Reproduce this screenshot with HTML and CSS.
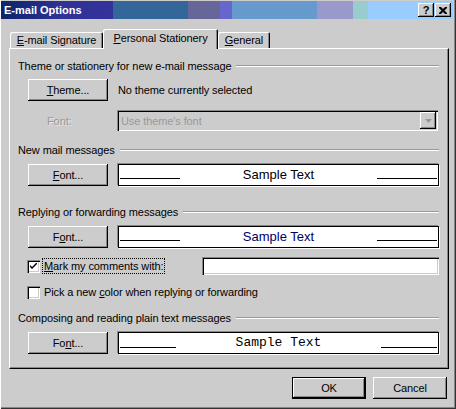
FILE: index.html
```html
<!DOCTYPE html>
<html lang="en">
<head>
  <meta charset="UTF-8">
  <title>E-mail Options</title>
  <link rel="stylesheet" href="styles.css">
</head>
<body>
  <div class="window">
    <div class="titlebar">
      <span class="title">E-mail Options</span>
      <div class="title-buttons">
        <span class="tb-btn">?</span>
        <span class="tb-btn">
          <svg width="8" height="7" viewBox="0 0 8 7"><path d="M0 0h2l2 2 2-2h2v1l-2.5 2.5L8 6v1H6L4 5 2 7H0V6l2.5-2.5L0 1z" fill="#000"/></svg>
        </span>
      </div>
    </div>

    <div class="tabs">
      <div class="tab tab-sig"><u>E</u>-mail Signature</div>
      <div class="tab tab-active"><u>P</u>ersonal Stationery</div>
      <div class="tab tab-gen"><u>G</u>eneral</div>
    </div>

    <div class="panel">
      <div class="group-head head-first"><span>Theme or stationery for new e-mail message</span><i></i></div>
      <div class="row row-theme">
        <button class="btn"><u>T</u>heme...</button>
        <span class="row-text">No theme currently selected</span>
      </div>
      <div class="row row-font">
        <span class="label-disabled">Font:</span>
        <div class="combo">
          <span>Use theme's font</span>
          <span class="combo-arrow">
            <svg width="7" height="4" viewBox="0 0 7 4"><path d="M0 0h7L3.5 4z" fill="#999"/></svg>
          </span>
        </div>
      </div>

      <div class="group-head head-new"><span>New mail messages</span><i></i></div>
      <div class="row row-sample">
        <button class="btn"><u>F</u>ont...</button>
        <div class="sample"><b class="rule"></b><span class="sample-text">Sample Text</span><b class="rule"></b></div>
      </div>

      <div class="group-head head-reply"><span>Replying or forwarding messages</span><i></i></div>
      <div class="row row-sample">
        <button class="btn">F<u>o</u>nt...</button>
        <div class="sample"><b class="rule"></b><span class="sample-text navy">Sample Text</span><b class="rule"></b></div>
      </div>
      <div class="row row-mark">
        <span class="check checked">
          <svg width="7" height="7" viewBox="0 0 7 7"><path d="M0 2l2 2 5-5v2L2 6 0 4z" fill="#000"/></svg>
        </span>
        <span class="check-label focused"><u>M</u>ark my comments with:</span>
        <div class="textbox"></div>
      </div>
      <div class="row row-pick">
        <span class="check"></span>
        <span class="check-label">Pick a new <u>c</u>olor when replying or forwarding</span>
      </div>

      <div class="group-head head-plain"><span>Composing and reading plain text messages</span><i></i></div>
      <div class="row row-sample">
        <button class="btn">Fo<u>n</u>t...</button>
        <div class="sample mono"><b class="rule"></b><span class="sample-text">Sample Text</span><b class="rule"></b></div>
      </div>
    </div>

    <div class="actions">
      <button class="btn btn-default">OK</button>
      <button class="btn btn-dlg">Cancel</button>
    </div>
  </div>
</body>
</html>
```

FILE: styles.css
```css
/* Reset */
* {
  margin: 0;
  padding: 0;
  box-sizing: border-box;
}

body {
  font-family: 'Liberation Sans', Arial, sans-serif;
  font-size: 11px;
  letter-spacing: -0.1px;
  color: #000;
  background-color: #ccc;
  width: 456px;
  height: 409px;
  overflow: hidden;
}

u {
  text-decoration: underline;
  text-underline-offset: 1px;
}

/* Window frame */
.window {
  width: 456px;
  height: 409px;
  background-color: #ccc;
  padding: 1px 3px 0 1px;
  display: flex;
  flex-direction: column;
  box-shadow: inset 1px 0 #fff, inset -1px -1px #333, inset -2px -2px #888;
}

/* Title bar */
.titlebar {
  height: 18px;
  display: flex;
  align-items: center;
  justify-content: space-between;
  padding: 0 2px 0 3px;
  background: linear-gradient(90deg,
    #0c2668 0, #1c2a80 30px, #303296 60px, #333399 112px,
    #336699 112px, #336699 187px,
    #666699 187px, #666699 219px,
    #6666cc 219px, #6666cc 231px,
    #6699cc 231px, #6699cc 316px,
    #9999cc 316px, #9999cc 352px,
    #99cccc 352px, #99cccc 367px,
    #99ccff 367px);
}

.title {
  color: #fff;
  font-weight: bold;
  font-size: 11px;
  letter-spacing: 0;
}

.title-buttons {
  display: flex;
  gap: 1px;
}

.tb-btn {
  width: 16px;
  height: 14px;
  background-color: #ccc;
  display: flex;
  align-items: center;
  justify-content: center;
  font-weight: bold;
  font-size: 11px;
  box-shadow: inset -1px -1px #000, inset 1px 1px #fff, inset -2px -2px #888;
}

/* Tabs */
.tabs {
  height: 29px;
  display: flex;
  align-items: flex-end;
  padding-left: 9px;
  position: relative;
  z-index: 1;
}

.tab {
  height: 16px;
  padding-top: 2px;
  text-align: center;
  background-color: #ccc;
  border-radius: 2px 2px 0 0;
  box-shadow: inset 1px 1px #fff, inset -1px 0 #000, inset -2px 0 #888;
}

.tab-sig {
  width: 93px;
}

.tab-active {
  width: 115px;
  height: 20px;
  margin-bottom: -1px;
  padding-top: 3px;
}

.tab-gen {
  width: 52px;
}

/* Tab panel */
.panel {
  margin-left: 8px;
  width: 440px;
  height: 321px;
  padding: 0 9px 0 8px;
  border: 1px solid;
  border-color: #fff #000 #000 #fff;
  box-shadow: inset -1px -1px #888;
  display: flex;
  flex-direction: column;
}

/* Group headers with etched rule */
.group-head {
  height: 14px;
  display: flex;
  align-items: center;
}

.group-head i {
  flex: 1;
  height: 2px;
  margin-left: 5px;
  border-top: 1px solid #999;
  border-bottom: 1px solid #fff;
}

.head-first { margin-top: 10px; }
.head-new { margin-top: 12px; }
.head-reply { margin-top: 19px; }
.head-plain { margin-top: 12px; }

/* Rows */
.row {
  display: flex;
  align-items: center;
  padding-left: 10px;
}

.row-theme {
  margin-top: 6px;
  height: 22px;
}

.row-text {
  margin-left: 10px;
}

.row-font {
  margin-top: 9px;
  height: 21px;
}

.label-disabled {
  color: #999;
  width: 89px;
  padding-left: 19px;
  text-shadow: 1px 1px #e6e6e6;
}

.row-sample {
  margin-top: 7px;
  height: 22px;
}

.row-mark {
  margin-top: 9px;
  height: 18px;
}

.row-pick {
  margin-top: 10px;
  height: 14px;
}

/* Buttons */
.btn {
  width: 80px;
  height: 22px;
  font-family: inherit;
  font-size: 11px;
  letter-spacing: -0.1px;
  color: #000;
  background-color: #ccc;
  border: none;
  box-shadow: inset -1px -1px #000, inset 1px 1px #fff, inset -2px -2px #888;
}

/* Disabled combo */
.combo {
  width: 321px;
  height: 21px;
  display: flex;
  align-items: center;
  justify-content: space-between;
  padding: 0 2px 0 4px;
  color: #999;
  box-shadow: inset 1px 1px #888, inset 2px 2px #000, inset -1px -1px #fff, inset -2px -2px #ccc;
}

.combo-arrow {
  width: 16px;
  height: 17px;
  display: flex;
  align-items: center;
  justify-content: center;
  box-shadow: inset -1px -1px #000, inset 1px 1px #fff, inset -2px -2px #888;
}

/* Sample text boxes */
.sample {
  margin-left: 10px;
  width: 321px;
  height: 22px;
  background-color: #fff;
  border: 1px solid #000;
  box-shadow: -1px -1px 0 #888, 1px 1px 0 #fff;
  display: flex;
  align-items: flex-start;
  padding: 0 1px;
}

.rule {
  width: 60px;
  height: 14px;
  border-bottom: 1px solid #000;
}

.sample-text {
  flex: 1;
  text-align: center;
  font-size: 13px;
  letter-spacing: 0;
  line-height: 20px;
}

.navy {
  color: #000066;
}

.mono .sample-text {
  font-family: 'Liberation Mono', 'Courier New', monospace;
}

.mono .rule {
  width: 56px;
  height: 15px;
}

/* Checkboxes */
.check {
  width: 13px;
  height: 13px;
  margin-left: -1px;
  background-color: #fff;
  display: flex;
  align-items: center;
  justify-content: center;
  box-shadow: inset 1px 1px #888, inset 2px 2px #000, inset -1px -1px #fff, inset -2px -2px #ccc;
}

.check-label {
  margin-left: 3px;
  padding: 1px;
}

.focused {
  outline: 1px dotted #000;
}

.textbox {
  margin-left: auto;
  width: 237px;
  height: 18px;
  background-color: #fff;
  box-shadow: inset 1px 1px #888, inset 2px 2px #000, inset -1px -1px #fff, inset -2px -2px #ccc;
}

/* Dialog buttons */
.actions {
  display: flex;
  justify-content: flex-end;
  gap: 7px;
  margin-top: 8px;
  padding-right: 6px;
}

.btn-default,
.btn-dlg {
  width: 74px;
}

.btn-default {
  border: 1px solid #000;
}
```
